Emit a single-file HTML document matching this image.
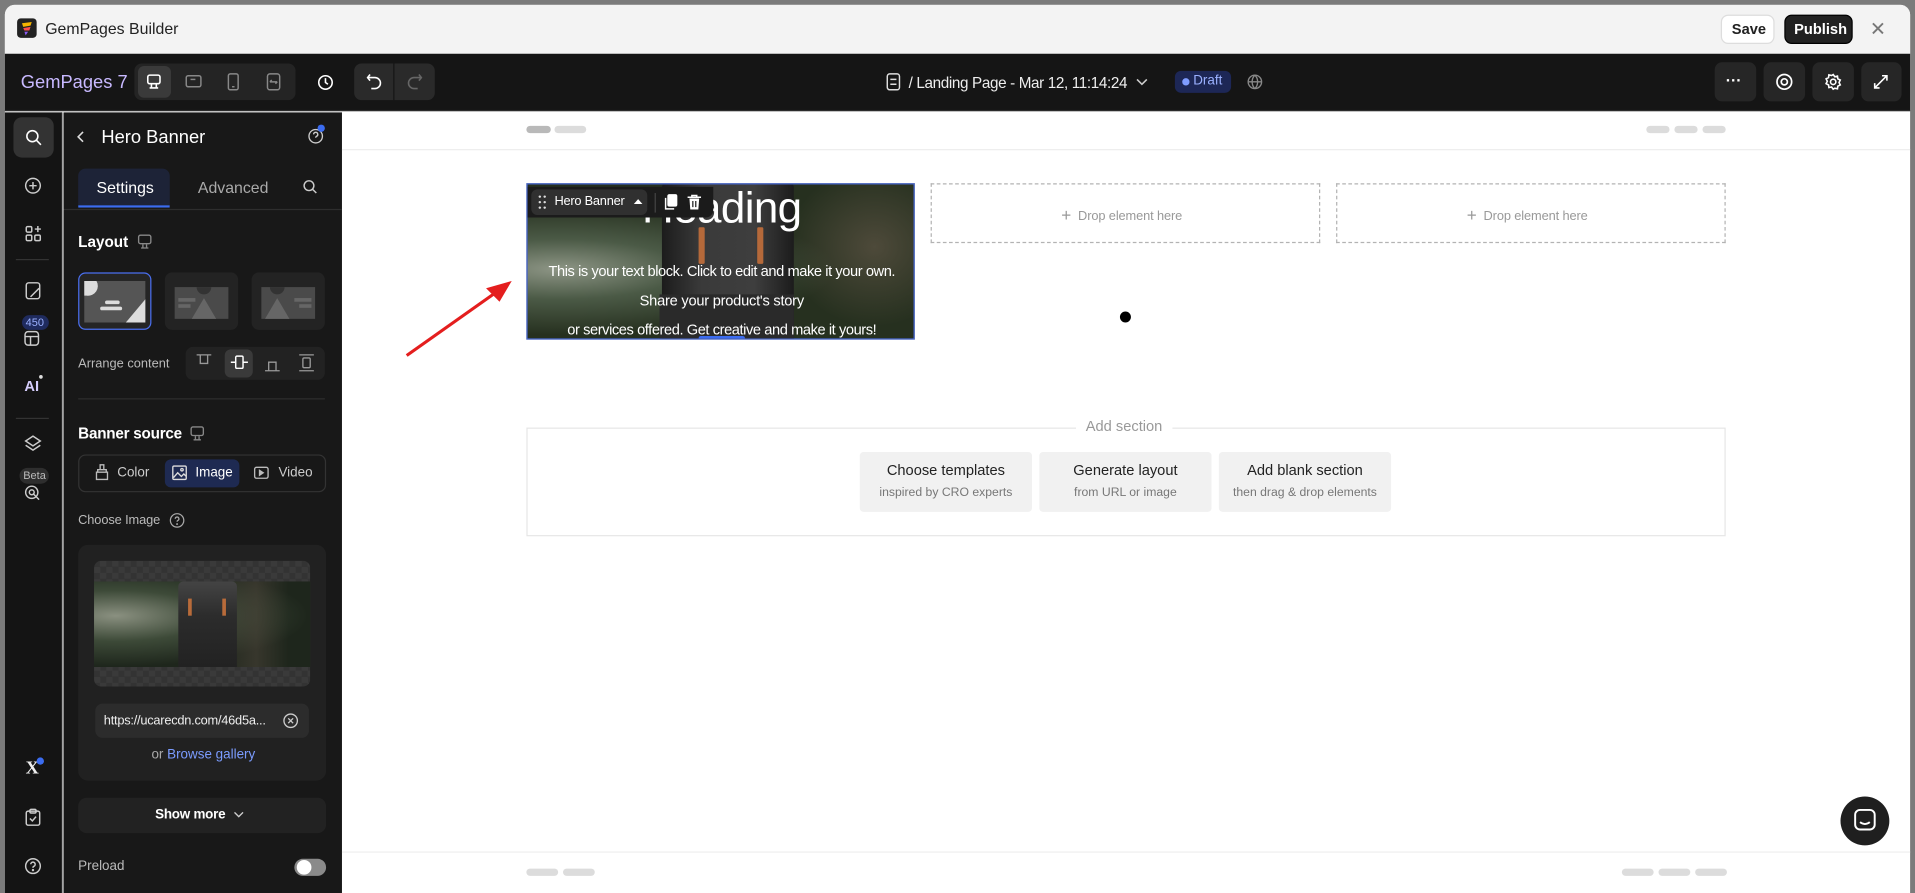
<!DOCTYPE html>
<html><head><meta charset="utf-8"><style>
*{box-sizing:border-box;margin:0;padding:0}
html,body{width:1915px;height:893px;overflow:hidden;background:#7b7b7b}
body{font-family:"Liberation Sans",sans-serif}
#w{position:absolute;left:0;top:0;width:1568px;height:731px;transform:scale(1.22130,1.22161);transform-origin:0 0}
.a{position:absolute}
.t{position:absolute;white-space:nowrap}
.ib{position:absolute;background:#262626;border-radius:6px}
svg{position:absolute;overflow:visible}
.dk{color:#fff}
.pill{position:absolute;height:6px;border-radius:3px;background:#dcdcdc}
</style></head><body><div id="w">
<div class="a" style="left:4px;top:4px;width:1560px;height:727px;background:#fff;border-radius:8px 8px 0 0;overflow:hidden"></div>
<div class="a" style="left:4px;top:4px;width:1560px;height:40px;background:#f3f3f3;border-radius:8px 8px 0 0"></div>
<div class="a" style="left:14px;top:15px;width:16px;height:16px;background:#222;border-radius:3px"></div>
<svg style="left:14px;top:15px" width="16" height="16"><path d="M4 4 L12 3 L11 6 L5 7Z" fill="#f5b400"/><path d="M5 8 L11 7 L10 10 L6 10Z" fill="#ff4d4d"/><path d="M6 11 L9 11 L7 14Z" fill="#8b5cf6"/></svg>
<div class="t" style="left:37px;top:16px;font-size:13px;color:#222">GemPages Builder</div>
<div class="a" style="left:1409px;top:12px;width:44px;height:24px;background:#fff;border:1px solid #ddd;border-radius:6px"></div>
<div class="t" style="left:1418px;top:17px;font-size:12px;font-weight:bold;color:#222">Save</div>
<div class="a" style="left:1461px;top:12px;width:56px;height:24px;background:#222;border-radius:6px;border:1px solid #000"></div>
<div class="t" style="left:1469px;top:17px;font-size:12px;font-weight:bold;color:#fff">Publish</div>
<div class="t" style="left:1531px;top:14px;font-size:16px;color:#777">✕</div>

<div class="a" style="left:4px;top:44px;width:1560px;height:47px;background:#151515;border-bottom:1px solid #2b2b2b"></div>
<div class="t" style="left:17px;top:59px;font-size:15px;color:#c8b9ff">GemPages 7</div>
<div class="a" style="left:110px;top:52px;width:132px;height:30px;background:#242424;border-radius:6px"></div>
<div class="a" style="left:113px;top:54px;width:27px;height:26px;background:#3a3a3a;border-radius:5px"></div>
<svg style="left:120px;top:61px" width="12" height="12" fill="none" stroke="#fff" stroke-width="1.3"><rect x="1" y="0.5" width="10" height="7" rx="1.5"/><path d="M4 8v3M8 8v3M2.5 11h7"/></svg>
<svg style="left:152px;top:61px" width="13" height="12" fill="none" stroke="#888" stroke-width="1.2"><rect x="0.5" y="1" width="12" height="9" rx="1.5"/><path d="M4 4h4"/></svg>
<svg style="left:186px;top:60px" width="10" height="14" fill="none" stroke="#888" stroke-width="1.2"><rect x="1" y="0.5" width="8" height="13" rx="1.5"/><path d="M4 11h2"/></svg>
<svg style="left:218px;top:60px" width="12" height="14" fill="none" stroke="#888" stroke-width="1.2"><rect x="1" y="0.5" width="10" height="13" rx="2"/><path d="M3 7h6M3 7l1.5-1.5M9 7L7.5 8.5"/></svg>
<svg style="left:260px;top:61px" width="13" height="13" fill="none" stroke="#fff" stroke-width="1.3"><circle cx="6.5" cy="6.5" r="5.5"/><path d="M6.5 3v3.5l2 1.5"/></svg>
<div class="a" style="left:290px;top:52px;width:66px;height:30px;background:#2a2a2a;border-radius:6px"></div>
<div class="a" style="left:322px;top:52px;width:1px;height:30px;background:#151515"></div>
<svg style="left:300px;top:60px" width="13" height="13" fill="none" stroke="#fff" stroke-width="1.3"><path d="M3 1L1 3.5 3 6"/><path d="M1 3.5h6a4.5 4.5 0 0 1 0 9H4"/></svg>
<svg style="left:333px;top:60px" width="13" height="13" fill="none" stroke="#666" stroke-width="1.3"><path d="M10 1l2 2.5L10 6"/><path d="M12 3.5H6a4.5 4.5 0 0 0 0 9h3"/></svg>
<svg style="left:726px;top:60px" width="11" height="14" fill="none" stroke="#ddd" stroke-width="1.2"><rect x="0.5" y="0.5" width="10" height="13" rx="2"/><path d="M3 5h5M3 9h5"/></svg>
<div class="t" style="left:744px;top:61px;font-size:12.5px;color:#eee;letter-spacing:-.3px">/ Landing Page - Mar 12, 11:14:24</div>
<svg style="left:930px;top:64px" width="10" height="6" fill="none" stroke="#ccc" stroke-width="1.3"><path d="M1 1l4 4 4-4"/></svg>
<div class="a" style="left:962px;top:58px;width:46px;height:18px;background:#1d2756;border-radius:5px"></div>
<div class="a" style="left:968px;top:64px;width:6px;height:6px;background:#7f9cff;border-radius:50%"></div>
<div class="t" style="left:977px;top:60px;font-size:11px;color:#9bb1ff">Draft</div>
<svg style="left:1021px;top:60px" width="13" height="14" fill="none" stroke="#888" stroke-width="1.1"><circle cx="6.5" cy="7" r="5.5"/><path d="M1 7h11M6.5 1.5c-3 3-3 8 0 11M6.5 1.5c3 3 3 8 0 11"/></svg>
<div class="ib" style="left:1404px;top:51px;width:34px;height:32px"></div>
<div class="t" style="left:1413px;top:58px;font-size:13px;color:#fff;font-weight:bold">···</div>
<div class="ib" style="left:1444px;top:51px;width:34px;height:32px"></div>
<svg style="left:1454px;top:60px" width="14" height="14" fill="none" stroke="#fff" stroke-width="1.4"><circle cx="7" cy="7" r="6"/><circle cx="7" cy="7" r="2.5"/></svg>
<div class="ib" style="left:1484px;top:51px;width:34px;height:32px"></div>
<svg style="left:1494px;top:60px" width="14" height="14" fill="none" stroke="#fff" stroke-width="1.3"><circle cx="7" cy="7" r="2.2"/><path d="M7 1l1.3 1.8 2.2-.5.3 2.2 2 1-1 2 1 2-2 1-.3 2.2-2.2-.5L7 13l-1.3-1.8-2.2.5-.3-2.2-2-1 1-2-1-2 2-1 .3-2.2 2.2.5Z"/></svg>
<div class="ib" style="left:1524px;top:51px;width:33px;height:32px"></div>
<svg style="left:1534px;top:61px" width="12" height="12" fill="none" stroke="#fff" stroke-width="1.3"><path d="M1 11L11 1M7 1h4v4M1 7v4h4"/></svg>

<div class="a" style="left:4px;top:92px;width:47px;height:639px;background:#141414;border-right:1px solid #2a2a2a"></div>
<div class="a" style="left:11px;top:96px;width:33px;height:33px;background:#333;border-radius:7px"></div>
<svg style="left:21px;top:106px" width="13" height="13" fill="none" stroke="#fff" stroke-width="1.3"><circle cx="5.5" cy="5.5" r="4.5"/><path d="M9 9l3.5 3.5"/></svg>
<svg style="left:20px;top:145px" width="14" height="14" fill="none" stroke="#ccc" stroke-width="1.2"><circle cx="7" cy="7" r="6"/><path d="M7 4v6M4 7h6"/></svg>
<svg style="left:21px;top:185px" width="13" height="13" fill="none" stroke="#ccc" stroke-width="1.2"><rect x="0.5" y="0.5" width="4.5" height="4.5" rx="1"/><rect x="0.5" y="7.5" width="4.5" height="4.5" rx="1"/><rect x="7.5" y="7.5" width="4.5" height="4.5" rx="1"/><path d="M10 0v5M7.5 2.5h5"/></svg>
<div class="a" style="left:13px;top:212px;width:27px;height:1px;background:#333"></div>
<svg style="left:21px;top:231px" width="13" height="14" fill="none" stroke="#ccc" stroke-width="1.2"><rect x="0.5" y="0.5" width="11" height="13" rx="2"/><path d="M4 12l7-7"/></svg>
<div class="a" style="left:18px;top:258px;width:22px;height:12px;background:#1f2b5e;border-radius:6px"></div>
<div class="t" style="left:21px;top:259px;font-size:9px;color:#9bb1ff">450</div>
<svg style="left:20px;top:271px" width="12" height="12" fill="none" stroke="#ccc" stroke-width="1.2"><rect x="0.5" y="0.5" width="11" height="11" rx="2.5"/><path d="M0.5 4.5h11M5 4.5v7"/></svg>
<div class="t" style="left:20px;top:309px;font-size:12px;font-weight:bold;color:#d5cdfc">AI</div>
<div class="a" style="left:32px;top:307px;width:3px;height:3px;background:#ddd;border-radius:50%"></div>
<div class="a" style="left:13px;top:342px;width:27px;height:1px;background:#333"></div>
<svg style="left:20px;top:356px" width="14" height="14" fill="none" stroke="#ccc" stroke-width="1.2"><path d="M7 1l6 4-6 4-6-4Z"/><path d="M1 8.5l6 4 6-4"/></svg>
<div class="a" style="left:16px;top:383px;width:24px;height:13px;background:#2e2e2e;border-radius:7px"></div>
<div class="t" style="left:19px;top:384px;font-size:9px;color:#bbb">Beta</div>
<svg style="left:20px;top:397px" width="13" height="13" fill="none" stroke="#ccc" stroke-width="1.2"><circle cx="6" cy="6" r="5"/><circle cx="6" cy="6" r="2"/><path d="M7 7l5 5"/></svg>
<div class="t" style="left:21px;top:621px;font-size:15px;font-weight:bold;color:#eee;font-family:'Liberation Serif',serif">X</div>
<div class="a" style="left:30px;top:620px;width:6px;height:6px;background:#3b6cf0;border-radius:50%"></div>
<svg style="left:21px;top:662px" width="12" height="14" fill="none" stroke="#ccc" stroke-width="1.2"><rect x="0.5" y="2" width="11" height="11.5" rx="1.5"/><rect x="3.5" y="0.5" width="5" height="3" rx="1"/><path d="M3.5 8l2 2 3-3.5"/></svg>
<svg style="left:20px;top:702px" width="14" height="14" fill="none" stroke="#ccc" stroke-width="1.2"><circle cx="7" cy="7" r="6"/><path d="M5.2 5.5a1.8 1.8 0 1 1 2.4 1.7c-.5.2-.6.6-.6 1.2"/><circle cx="7" cy="10.3" r=".4" fill="#ccc"/></svg>

<div class="a" style="left:52px;top:92px;width:228px;height:639px;background:#181818"></div>
<svg style="left:63px;top:107px" width="6" height="10" fill="none" stroke="#ddd" stroke-width="1.3"><path d="M5 1L1 5l4 4"/></svg>
<div class="t dk" style="left:83px;top:104px;font-size:15px">Hero Banner</div>
<svg style="left:252px;top:105px" width="13" height="13" fill="none" stroke="#ccc" stroke-width="1.1"><circle cx="6.5" cy="6.5" r="5.5"/><path d="M4.8 5a1.7 1.7 0 1 1 2.3 1.6c-.5.2-.6.6-.6 1.2"/></svg>
<div class="a" style="left:260px;top:102px;width:6px;height:6px;background:#3b6cf0;border-radius:50%"></div>
<div class="a" style="left:64px;top:138px;width:75px;height:32px;background:#1d2337;border-radius:6px 6px 0 0;border-bottom:2px solid #3b6cf0"></div>
<div class="t dk" style="left:79px;top:146px;font-size:13px">Settings</div>
<div class="t" style="left:162px;top:146px;font-size:13px;color:#aaa">Advanced</div>
<svg style="left:248px;top:147px" width="12" height="12" fill="none" stroke="#ccc" stroke-width="1.2"><circle cx="5" cy="5" r="4"/><path d="M8 8l3 3"/></svg>
<div class="a" style="left:52px;top:171px;width:228px;height:1px;background:#2e2e2e"></div>
<div class="t dk" style="left:64px;top:191px;font-size:12.5px;font-weight:bold">Layout</div>
<svg style="left:113px;top:192px" width="11" height="12" fill="none" stroke="#888" stroke-width="1.1"><rect x="0.5" y="0.5" width="10" height="7" rx="1.5"/><path d="M4 8v3M7 8v3M2.5 11h6"/></svg>
<div class="a" style="left:64px;top:223px;width:60px;height:47px;background:#252525;border:1px solid #4a6ff0;border-radius:6px"></div>
<svg style="left:69px;top:230px" width="50" height="34"><rect x="0" y="0" width="50" height="34" fill="#555"/><path d="M0 0h10a8 8 0 0 1-8 12H0Z" fill="#ddd"/><path d="M50 15v19H34Z" fill="#ddd"/><rect x="17" y="16" width="12" height="3" rx="1.5" fill="#ddd"/><rect x="13" y="21" width="18" height="3" rx="1.5" fill="#ddd"/></svg>
<div class="a" style="left:135px;top:223px;width:60px;height:47px;background:#232323;border-radius:6px"></div>
<svg style="left:140px;top:230px" width="50" height="34"><rect x="3" y="5" width="44" height="26" fill="#4a4a4a"/><path d="M21 5a6 6 0 0 0 12 0Z" fill="#333"/><path d="M27 14l10 17H17Z" fill="#666"/><rect x="6" y="14" width="14" height="3" fill="#666"/><rect x="6" y="19" width="10" height="3" fill="#666"/></svg>
<div class="a" style="left:206px;top:223px;width:60px;height:47px;background:#232323;border-radius:6px"></div>
<svg style="left:211px;top:230px" width="50" height="34"><rect x="3" y="5" width="44" height="26" fill="#4a4a4a"/><path d="M10 5a6 6 0 0 0 12 0Z" fill="#333"/><path d="M16 14l10 17H6Z" fill="#666"/><rect x="30" y="14" width="14" height="3" fill="#666"/><rect x="34" y="19" width="10" height="3" fill="#666"/></svg>
<div class="t" style="left:64px;top:292px;font-size:10.5px;color:#bbb">Arrange content</div>
<div class="a" style="left:152px;top:284px;width:114px;height:27px;background:#222;border-radius:6px"></div>
<div class="a" style="left:184px;top:286px;width:23px;height:23px;background:#3a3a3a;border-radius:5px"></div>
<svg style="left:160px;top:290px" width="14" height="12" fill="none" stroke="#999" stroke-width="1.1"><path d="M1 .5h12M4 .5v7h6v-7"/></svg>
<svg style="left:189px;top:290px" width="14" height="14" fill="none" stroke="#fff" stroke-width="1.2"><rect x="4" y="1.5" width="6" height="10" rx="1"/><path d="M0 6.5h4M10 6.5h4"/></svg>
<svg style="left:216px;top:292px" width="14" height="12" fill="none" stroke="#999" stroke-width="1.1"><path d="M1 11.5h12M4 11.5v-7h6v7"/></svg>
<svg style="left:244px;top:290px" width="14" height="14" fill="none" stroke="#999" stroke-width="1.1"><path d="M1 .5h12M1 13.5h12"/><rect x="4" y="3" width="6" height="8" rx="1"/></svg>
<div class="a" style="left:64px;top:326px;width:202px;height:1px;background:#2e2e2e"></div>
<div class="t dk" style="left:64px;top:348px;font-size:12.5px;font-weight:bold;letter-spacing:-.2px">Banner source</div>
<svg style="left:156px;top:349px" width="11" height="12" fill="none" stroke="#888" stroke-width="1.1"><rect x="0.5" y="0.5" width="10" height="7" rx="1.5"/><path d="M4 8v3M7 8v3M2.5 11h6"/></svg>
<div class="a" style="left:64px;top:372px;width:203px;height:31px;border:1px solid #333;border-radius:6px"></div>
<svg style="left:78px;top:380px" width="11" height="13" fill="none" stroke="#bbb" stroke-width="1.1"><path d="M4 .5h3v4H4ZM1 6.5h9v6H1ZM2 4.5h7v2H2Z"/></svg>
<div class="t" style="left:96px;top:381px;font-size:11px;color:#ccc">Color</div>
<div class="a" style="left:135px;top:376px;width:61px;height:23px;background:#1e2a52;border-radius:5px"></div>
<svg style="left:141px;top:381px" width="12" height="12" fill="none" stroke="#ddd" stroke-width="1.1"><rect x="0.5" y="0.5" width="11" height="11" rx="1"/><path d="M1 10l3.5-4 3 3 2-2 2 2"/><circle cx="8" cy="3.5" r="1"/></svg>
<div class="t" style="left:160px;top:381px;font-size:11px;color:#fff">Image</div>
<svg style="left:208px;top:382px" width="12" height="10" fill="none" stroke="#bbb" stroke-width="1.1"><rect x="0.5" y="0.5" width="11" height="9" rx="1.5"/><path d="M4.5 3v4l3-2Z" fill="#bbb"/></svg>
<div class="t" style="left:228px;top:381px;font-size:11px;color:#ccc">Video</div>
<div class="t" style="left:64px;top:420px;font-size:10.5px;color:#bbb;letter-spacing:-.1px">Choose Image</div>
<svg style="left:139px;top:420px" width="12" height="12" fill="none" stroke="#aaa" stroke-width="1"><circle cx="6" cy="6" r="5.5"/><path d="M4.5 4.7a1.5 1.5 0 1 1 2 1.4c-.4.2-.5.5-.5 1"/><circle cx="6" cy="9" r=".3"/></svg>
<div class="a" style="left:64px;top:446px;width:203px;height:193px;background:#212121;border-radius:8px"></div>
<div class="a" style="left:77px;top:459px;width:177px;height:103px;border-radius:6px;background:repeating-conic-gradient(#3a3a3a 0 25%,#333 0 50%) 0 0/10px 10px"></div>
<div class="a" style="left:77px;top:476px;width:177px;height:70px;background:radial-gradient(ellipse at 10% 40%,#8a9080 0,#3d4a38 35%,#1e261c 70%),#252c22"></div>
<div class="a" style="left:77px;top:476px;width:177px;height:70px;background:linear-gradient(90deg,transparent 55%,rgba(80,70,60,.5) 75%,transparent 90%)"></div>
<div class="a" style="left:146px;top:476px;width:48px;height:70px;background:linear-gradient(#444,#2c2c2c 40%,#222);border-radius:4px 4px 0 0"></div>
<div class="a" style="left:154px;top:490px;width:3px;height:14px;background:#b86b3a"></div>
<div class="a" style="left:182px;top:490px;width:3px;height:14px;background:#b86b3a"></div>
<div class="a" style="left:78px;top:576px;width:175px;height:28px;background:#2c2c2c;border-radius:6px"></div>
<div class="t" style="left:85px;top:584px;font-size:10.5px;color:#eee;letter-spacing:-.2px">https://ucarecdn.com/46d5a...</div>
<svg style="left:232px;top:584px" width="12" height="12" fill="none" stroke="#ccc" stroke-width="1.1"><circle cx="6" cy="6" r="5.5"/><path d="M4 4l4 4M8 4l-4 4"/></svg>
<div class="t" style="left:124px;top:612px;font-size:11px;color:#aaa">or <span style="color:#7b9cff">Browse gallery</span></div>
<div class="a" style="left:64px;top:653px;width:203px;height:29px;background:#222;border-radius:7px"></div>
<div class="t dk" style="left:127px;top:661px;font-size:11px;font-weight:bold;letter-spacing:-.2px">Show more</div>
<svg style="left:191px;top:664px" width="9" height="6" fill="none" stroke="#ccc" stroke-width="1.1"><path d="M1 1l3.5 3.5L8 1"/></svg>
<div class="t" style="left:64px;top:703px;font-size:11px;color:#bbb">Preload</div>
<div class="a" style="left:241px;top:703px;width:26px;height:14px;background:#8a8a8a;border-radius:7px"></div>
<div class="a" style="left:243px;top:704px;width:12px;height:12px;background:#fff;border-radius:50%"></div>

<div class="a" style="left:280px;top:92px;width:1284px;height:31px;border-bottom:1px solid #eee"></div>
<div class="pill" style="left:431px;top:103px;width:20px;background:#b9b9b9"></div>
<div class="pill" style="left:454px;top:103px;width:26px"></div>
<div class="pill" style="left:1348px;top:103px;width:19px"></div>
<div class="pill" style="left:1371px;top:103px;width:19px"></div>
<div class="pill" style="left:1394px;top:103px;width:19px"></div>

<div class="a" style="left:431px;top:150px;width:318px;height:128px;overflow:hidden;border:1px solid #4a6ad8;background:radial-gradient(ellipse at 8% 55%,#8d9585 0,#4b5a46 25%,#26301f 55%),#1f2a1c">
  <div class="a" style="left:200px;top:0;width:120px;height:128px;background:radial-gradient(ellipse at 70% 40%,rgba(110,95,80,.55),transparent 60%)"></div>
  <div class="a" style="left:110px;top:-5px;width:108px;height:140px;background:linear-gradient(90deg,#1c1c1c,#3a3a3a 30%,#3e3e3e 70%,#1c1c1c);border-radius:8px"></div>
  <div class="a" style="left:140px;top:35px;width:5px;height:30px;background:#b5693a;border-radius:1px"></div>
  <div class="a" style="left:188px;top:35px;width:5px;height:30px;background:#b5693a;border-radius:1px"></div>
  <div class="a" style="left:108px;top:90px;width:110px;height:40px;background:#2a2a2a"></div>
  <div class="t" style="left:0;width:318px;text-align:center;top:-2px;font-size:36px;color:#fff;letter-spacing:-.5px">Heading</div>
  <div class="t" style="left:0;width:318px;text-align:center;top:64px;font-size:12px;color:#fff;letter-spacing:-.35px">This is your text block. Click to edit and make it your own.</div>
  <div class="t" style="left:0;width:318px;text-align:center;top:88px;font-size:12px;color:#fff;letter-spacing:-.2px">Share your product's story</div>
  <div class="t" style="left:0;width:318px;text-align:center;top:112px;font-size:12px;color:#fff;letter-spacing:-.35px">or services offered. Get creative and make it yours!</div>
  <div class="a" style="left:140px;top:124px;width:38px;height:4px;background:#3b6cf0;border-radius:2px"></div>
</div>
<div class="a" style="left:432px;top:153px;width:152px;height:25px;background:#1b1b1b;border-radius:0 0 6px 0"></div>
<div class="a" style="left:435px;top:155px;width:95px;height:21px;background:#303030;border-radius:5px"></div>
<svg style="left:441px;top:160px" width="6" height="11" fill="#ddd"><circle cx="1" cy="1" r="1"/><circle cx="5" cy="1" r="1"/><circle cx="1" cy="5.5" r="1"/><circle cx="5" cy="5.5" r="1"/><circle cx="1" cy="10" r="1"/><circle cx="5" cy="10" r="1"/></svg>
<div class="t" style="left:454px;top:159px;font-size:10.5px;color:#fff;letter-spacing:-.2px">Hero Banner</div>
<svg style="left:519px;top:163px" width="7" height="4"><path d="M0 4L3.5 0 7 4Z" fill="#fff"/></svg>
<div class="a" style="left:536px;top:158px;width:1px;height:16px;background:#444"></div>
<svg style="left:544px;top:159px" width="11" height="13" fill="none" stroke="#fff" stroke-width="1.2"><rect x="3" y="0.5" width="7" height="9" rx="1" fill="#fff"/><path d="M1 3v9h7"/></svg>
<svg style="left:563px;top:159px" width="11" height="13"><path d="M0 2.5h11M3.5 2.5V1h4v1.5" stroke="#fff" stroke-width="1.2" fill="none"/><path d="M1.5 3.5h8l-.7 9h-6.6Z" fill="#fff"/><path d="M4.3 5.5v5M6.7 5.5v5" stroke="#1b1b1b" stroke-width="1"/></svg>

<div class="a" style="left:762px;top:150px;width:319px;height:49px;border:1px dashed #b3b3b3"></div>
<div class="t" style="left:869px;top:167px;font-size:10.5px;color:#999;letter-spacing:-.1px"><span style="font-size:14px;position:relative;top:1px">+</span>&nbsp; Drop element here</div>
<div class="a" style="left:1094px;top:150px;width:319px;height:49px;border:1px dashed #b3b3b3"></div>
<div class="t" style="left:1201px;top:167px;font-size:10.5px;color:#999;letter-spacing:-.1px"><span style="font-size:14px;position:relative;top:1px">+</span>&nbsp; Drop element here</div>
<div class="a" style="left:917px;top:255px;width:9px;height:9px;background:#000;border-radius:50%"></div>

<svg style="left:0;top:0" width="1568" height="731"><path d="M333 291L408 238" stroke="#e41e1e" stroke-width="2.6" fill="none"/><path d="M419 230L398 236L409 247Z" fill="#e41e1e"/></svg>

<div class="a" style="left:431px;top:350px;width:982px;height:89px;border:1px solid #e6e6e6"></div>
<div class="t" style="left:881px;top:342px;padding:0 8px;background:#fff;font-size:12px;color:#999">Add section</div>
<div class="a" style="left:704px;top:370px;width:141px;height:49px;background:#f1f1f1;border-radius:3px"></div>
<div class="t" style="left:704px;width:141px;text-align:center;top:378px;font-size:12px;color:#222">Choose templates</div>
<div class="t" style="left:704px;width:141px;text-align:center;top:398px;font-size:10px;color:#777">inspired by CRO experts</div>
<div class="a" style="left:851px;top:370px;width:141px;height:49px;background:#f1f1f1;border-radius:3px"></div>
<div class="t" style="left:851px;width:141px;text-align:center;top:378px;font-size:12px;color:#222">Generate layout</div>
<div class="t" style="left:851px;width:141px;text-align:center;top:398px;font-size:10px;color:#777">from URL or image</div>
<div class="a" style="left:998px;top:370px;width:141px;height:49px;background:#f1f1f1;border-radius:3px"></div>
<div class="t" style="left:998px;width:141px;text-align:center;top:378px;font-size:12px;color:#222">Add blank section</div>
<div class="t" style="left:998px;width:141px;text-align:center;top:398px;font-size:10px;color:#777">then drag &amp; drop elements</div>

<div class="a" style="left:280px;top:697px;width:1284px;height:1px;background:#eee"></div>
<div class="pill" style="left:431px;top:711px;width:26px"></div>
<div class="pill" style="left:461px;top:711px;width:26px"></div>
<div class="pill" style="left:1328px;top:711px;width:26px"></div>
<div class="pill" style="left:1358px;top:711px;width:26px"></div>
<div class="pill" style="left:1388px;top:711px;width:26px"></div>
<div class="a" style="left:1507px;top:652px;width:40px;height:40px;background:#1f1f1f;border-radius:50%"></div>
<svg style="left:1518px;top:662px" width="18" height="19" fill="none" stroke="#fff" stroke-width="1.6"><rect x="1" y="1" width="16" height="16" rx="4"/><path d="M5 11c2.5 2 5.5 2 8 0"/></svg>
</div></body></html>
